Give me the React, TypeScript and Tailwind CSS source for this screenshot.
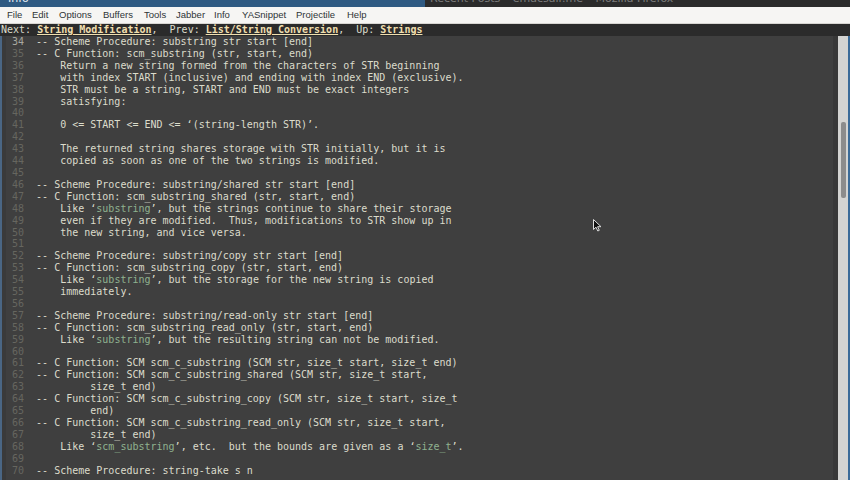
import React from "react";

type Seg = { t: string; g?: boolean };
type Line = Seg[];

const L = (s: string): Line => {
  const out: Seg[] = [];
  const re = /‘([^’]*)’/g;
  let last = 0;
  let m: RegExpExecArray | null;
  while ((m = re.exec(s))) {
    if (m.index > last) out.push({ t: s.slice(last, m.index) });
    out.push({ t: "‘" });
    out.push({ t: m[1], g: true });
    out.push({ t: "’" });
    last = m.index + m[0].length;
  }
  if (last < s.length) out.push({ t: s.slice(last) });
  return out;
};

const raw: string[] = [
  " -- Scheme Procedure: substring str start [end]",
  " -- C Function: scm_substring (str, start, end)",
  "     Return a new string formed from the characters of STR beginning",
  "     with index START (inclusive) and ending with index END (exclusive).",
  "     STR must be a string, START and END must be exact integers",
  "     satisfying:",
  "",
  "     0 <= START <= END <= #(string-length STR)#.",
  "",
  "     The returned string shares storage with STR initially, but it is",
  "     copied as soon as one of the two strings is modified.",
  "",
  " -- Scheme Procedure: substring/shared str start [end]",
  " -- C Function: scm_substring_shared (str, start, end)",
  "     Like ‘substring’, but the strings continue to share their storage",
  "     even if they are modified.  Thus, modifications to STR show up in",
  "     the new string, and vice versa.",
  "",
  " -- Scheme Procedure: substring/copy str start [end]",
  " -- C Function: scm_substring_copy (str, start, end)",
  "     Like ‘substring’, but the storage for the new string is copied",
  "     immediately.",
  "",
  " -- Scheme Procedure: substring/read-only str start [end]",
  " -- C Function: scm_substring_read_only (str, start, end)",
  "     Like ‘substring’, but the resulting string can not be modified.",
  "",
  " -- C Function: SCM scm_c_substring (SCM str, size_t start, size_t end)",
  " -- C Function: SCM scm_c_substring_shared (SCM str, size_t start,",
  "          size_t end)",
  " -- C Function: SCM scm_c_substring_copy (SCM str, size_t start, size_t",
  "          end)",
  " -- C Function: SCM scm_c_substring_read_only (SCM str, size_t start,",
  "          size_t end)",
  "     Like ‘scm_substring’, etc.  but the bounds are given as a ‘size_t’.",
  "",
  " -- Scheme Procedure: string-take s n",
];

const lines: Line[] = raw.map((s) =>
  s.includes("#(") ? [{ t: s.replace(/#\(/, "‘(").replace(/\)#/, ")’") }] : L(s)
);

const menu: { n: string; w: string }[] = [
  { n: "File", w: "w-[25px]" },
  { n: "Edit", w: "w-[27px]" },
  { n: "Options", w: "w-[44px]" },
  { n: "Buffers", w: "w-[41px]" },
  { n: "Tools", w: "w-[32px]" },
  { n: "Jabber", w: "w-[38px]" },
  { n: "Info", w: "w-[28px]" },
  { n: "YASnippet", w: "w-[54px]" },
  { n: "Projectile", w: "w-[51px]" },
  { n: "Help", w: "w-[30px]" },
];

export default function App() {
  return (
    <div className="relative w-[850px] h-[480px] overflow-hidden flex flex-col bg-[#3f3f3f] font-['DejaVu_Sans_Mono',monospace]">
      {/* title bars */}
      <div className="h-[7px] flex shrink-0 overflow-hidden">
        <div className="w-[425px] bg-[#2f5a82] overflow-hidden">
          <div className="relative -top-[7px] pl-[8px] text-[11px] leading-[12px] text-[#e8eef4] font-['DejaVu_Sans',sans-serif]">
            Info
          </div>
        </div>
        <div className="flex-1 bg-[#2b2b2b] overflow-hidden">
          <div className="relative -top-[7px] pl-[5px] text-[11px] leading-[12px] text-[#7c7c7c] font-['DejaVu_Sans',sans-serif]">
            Recent Posts – emacsair.me – Mozilla Firefox
          </div>
        </div>
      </div>
      {/* menu bar */}
      <div className="h-[17px] shrink-0 flex items-center pl-[7px] bg-[#f6f5f3] border-b border-[#d8d6d2] text-[9.5px] text-[#2e3436] font-['Liberation_Sans',Arial,sans-serif]">
        {menu.map((m) => (
          <span key={m.n} className={`${m.w} shrink-0 whitespace-nowrap`}>
            {m.n}
          </span>
        ))}
      </div>
      {/* header line */}
      <div className="h-[12px] shrink-0 bg-[#2b2b2b] pl-[1px] text-[10px] leading-[12px] text-[#dcdccc] whitespace-pre">
        <span>Next: </span>
        <span className="font-bold underline text-[#f0dfaf]">String Modification</span>
        <span>,  Prev: </span>
        <span className="font-bold underline text-[#f0dfaf]">List/String Conversion</span>
        <span>,  Up: </span>
        <span className="font-bold underline text-[#f0dfaf]">Strings</span>
      </div>
      {/* body */}
      <div className="flex-1 flex min-h-0">
        <div className="w-[2px] bg-[#4a6684] shrink-0" />
        <div className="w-[4px] bg-[#3a3a3a] shrink-0" />
        <div className="flex-1 min-w-0 flex flex-col text-[10px] leading-[11.92px]">
          {lines.map((ln, i) => {
            const num = 34 + i;
            return (
              <div key={i} className="flex whitespace-pre h-[11.92px]">
                <span className={`w-[24.08px] shrink-0 text-right pr-[6.02px] ${i === 0 ? "text-[#a8a8a0]" : "text-[#66665f]"}`}>
                  {num}
                </span>
                <span className="text-[#dcdccc]">
                  {ln.map((s, j) => (
                    <span key={j} className={s.g ? "text-[#8fb28f]" : ""}>
                      {s.t}
                    </span>
                  ))}
                </span>
              </div>
            );
          })}
        </div>
        <div className="w-[5px] bg-[#383838] shrink-0" />
        <div className="w-[10px] bg-[#d4d4d2] shrink-0 pt-[86px] pl-[3px]">
          <div className="w-[5px] h-[76px] rounded-[2px] bg-[#8c8c8c]" />
        </div>
        <div className="w-[2px] bg-[#3b6b98] shrink-0" />
      </div>
      {/* mouse pointer */}
      <svg className="absolute left-[593px] top-[219px]" width="9" height="13" viewBox="0 0 9 13">
        <path d="M0.5 0.5 L0.5 10.5 L3 8.2 L4.8 12 L6.3 11.3 L4.6 7.7 L8 7.7 Z" fill="#111" stroke="#ddd" strokeWidth="1" />
      </svg>
    </div>
  );
}
